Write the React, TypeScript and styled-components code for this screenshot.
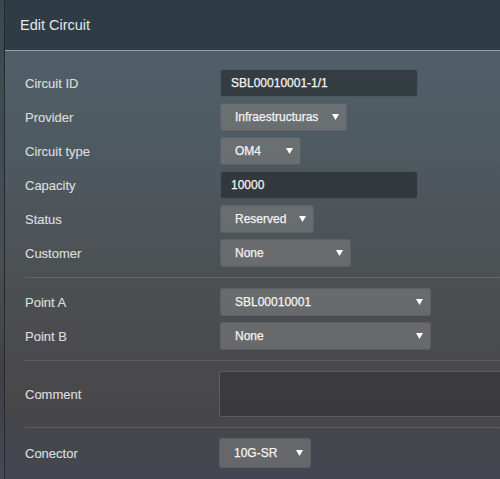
import React from 'react';
import styled, { createGlobalStyle } from 'styled-components';

const Global = createGlobalStyle`
  html, body { margin: 0; padding: 0; height: 100%; overflow: hidden; }
  body {
    background: linear-gradient(180deg, #3a4850 0%, #4a4e53 55%, #3e4046 80%, #464a52 100%);
    font-family: "Liberation Sans", Arial, Helvetica, sans-serif;
  }
  #root { height: 100%; overflow: hidden; }
`;

const Modal = styled.div`
  margin-left: 4px;
  width: 640px;
  height: 100%;
  border-left: 1px solid #222a30;
  display: flex;
  flex-direction: column;
`;

const Header = styled.div`
  height: 50px;
  flex: none;
  display: flex;
  align-items: center;
  padding-left: 15px;
  background: #2f3c45;
  border-bottom: 1px solid #9ca0a2;
`;

const Title = styled.h4`
  margin: 0;
  font-size: 14.5px;
  font-weight: normal;
  color: #e4e7e8;
  padding-bottom: 1px;
`;

const Body = styled.div`
  flex: 1;
  padding: 18px 0 0 20px;
  background: linear-gradient(
    180deg,
    #4f5f68 0%,
    #4e5a61 22%,
    #4c5154 50%,
    #4a4a4d 72%,
    #47474a 85%,
    #434751 100%
  );
`;

const Section = styled.div`
  display: flex;
  flex-direction: column;
  gap: 6px;
`;

const Row = styled.div`
  display: grid;
  grid-template-columns: 195px 1fr;
  align-items: center;
`;

const Label = styled.label`
  font-size: 13px;
  color: #dadddf;
  -webkit-text-stroke: 0.15px #dadddf;
`;

const Divider = styled.hr`
  margin: 10px 0;
  border: 0;
  height: 1px;
  background: rgba(255, 255, 255, 0.12);
`;

const TextInput = styled.input`
  box-sizing: border-box;
  width: 198px;
  height: 28px;
  padding: 0 10px;
  border-radius: 3px;
  border: 1px solid rgba(120, 135, 145, 0.35);
  background: rgba(0, 0, 0, 0.35);
  color: #f3f3f3;
  font-family: "Liberation Sans", Arial, Helvetica, sans-serif;
  font-size: 12px;
  outline: none;
  -webkit-text-stroke: 0.25px #f3f3f3;
`;

const TextArea = styled.textarea`
  box-sizing: border-box;
  width: 400px;
  height: 46px;
  margin-left: -1px;
  border-radius: 3px;
  border: 1px solid rgba(120, 135, 150, 0.45);
  background: rgba(0, 0, 0, 0.18);
  resize: none;
  outline: none;
  display: block;
`;

const SelectBox = styled.div<{ $w: number; $shift?: boolean }>`
  box-sizing: border-box;
  width: ${(p) => p.$w}px;
  height: ${(p) => (p.$shift ? 30 : 28)}px;
  margin-left: ${(p) => (p.$shift ? -1 : 0)}px;
  display: flex;
  align-items: center;
  justify-content: space-between;
  padding: 0 7px 0 14px;
  border-radius: 3px;
  border: 1px solid rgba(80, 90, 100, 0.6);
  background: rgba(125, 125, 125, 0.6);
  color: #f3f3f3;
  font-size: 12px;
  -webkit-text-stroke: 0.25px #f3f3f3;
`;

const Arrow = () => (
  <svg width="7" height="6" viewBox="0 0 7 6">
    <polygon points="0,0 7,0 3.5,6" fill="#ffffff" />
  </svg>
);

const Select = ({ value, w, shift }: { value: string; w: number; shift?: boolean }) => (
  <div>
    <SelectBox $w={w} $shift={shift}>
      <span>{value}</span>
      <Arrow />
    </SelectBox>
  </div>
);

export default function App() {
  return (
    <>
      <Global />
      <Modal>
        <Header>
          <Title>Edit Circuit</Title>
        </Header>
        <Body>
          <Section>
            <Row>
              <Label>Circuit ID</Label>
              <div>
                <TextInput readOnly value="SBL00010001-1/1" />
              </div>
            </Row>
            <Row>
              <Label>Provider</Label>
              <Select value="Infraestructuras" w={127} />
            </Row>
            <Row>
              <Label>Circuit type</Label>
              <Select value="OM4" w={81} />
            </Row>
            <Row>
              <Label>Capacity</Label>
              <div>
                <TextInput readOnly value="10000" />
              </div>
            </Row>
            <Row>
              <Label>Status</Label>
              <Select value="Reserved" w={94} />
            </Row>
            <Row>
              <Label>Customer</Label>
              <Select value="None" w={131} />
            </Row>
          </Section>
          <Divider />
          <Section>
            <Row>
              <Label>Point A</Label>
              <Select value="SBL00010001" w={211} />
            </Row>
            <Row>
              <Label>Point B</Label>
              <Select value="None" w={211} />
            </Row>
          </Section>
          <Divider />
          <Section>
            <Row>
              <Label>Comment</Label>
              <div>
                <TextArea readOnly />
              </div>
            </Row>
          </Section>
          <Divider />
          <Section>
            <Row>
              <Label>Conector</Label>
              <Select value="10G-SR" w={92} shift />
            </Row>
          </Section>
        </Body>
      </Modal>
    </>
  );
}
